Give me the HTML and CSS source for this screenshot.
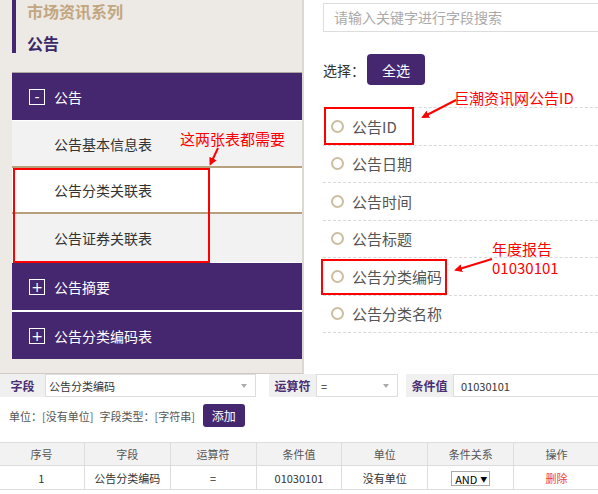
FILE: index.html
```html
<!DOCTYPE html>
<html lang="zh-CN">
<head>
<meta charset="utf-8">
<title>市场资讯系列</title>
<link rel="stylesheet" href="styles.css">
</head>
<body>
<div class="page">
  <div class="top">
    <aside class="side">
      <div class="brand">
        <div class="brand-title">市场资讯系列</div>
        <div class="brand-sub">公告</div>
      </div>
      <nav class="menu">
        <div class="menu-head"><span class="toggle">-</span>公告</div>
        <div class="menu-item first">公告基本信息表</div>
        <div class="menu-item active">公告分类关联表</div>
        <div class="menu-item last">公告证券关联表</div>
        <div class="menu-head"><span class="toggle">+</span>公告摘要</div>
        <div class="menu-head gap"><span class="toggle">+</span>公告分类编码表</div>
      </nav>
    </aside>
    <main class="fields">
      <div class="search">请输入关键字进行字段搜索</div>
      <div class="select-row"><span class="select-label">选择：</span><span class="btn-all">全选</span></div>
      <ul class="field-list">
        <li><span class="radio"></span>公告ID</li>
        <li><span class="radio"></span>公告日期</li>
        <li><span class="radio"></span>公告时间</li>
        <li><span class="radio"></span>公告标题</li>
        <li><span class="radio"></span>公告分类编码</li>
        <li><span class="radio"></span>公告分类名称</li>
      </ul>
    </main>
  </div>

  <div class="form-row">
    <div class="label">字段</div>
    <div class="sel sel-field">公告分类编码<span class="caret"></span></div>
    <div class="label label-op">运算符</div>
    <div class="sel sel-op">=<span class="caret"></span></div>
    <div class="label label-val">条件值</div>
    <div class="sel sel-val">01030101</div>
  </div>
  <div class="info-row">
    <span>单位：[没有单位]</span><span class="info-gap">字段类型：[字符串]</span>
    <span class="btn-add">添加</span>
  </div>

  <table class="cond">
    <thead>
      <tr><th>序号</th><th>字段</th><th>运算符</th><th>条件值</th><th>单位</th><th>条件关系</th><th>操作</th></tr>
    </thead>
    <tbody>
      <tr><td>1</td><td>公告分类编码</td><td>=</td><td>01030101</td><td>没有单位</td><td><span class="and">AND <span class="and-caret">▼</span></span></td><td class="del">删除</td></tr>
    </tbody>
  </table>

  <div class="note-box nb1"></div>
  <div class="note-box nb2"></div>
  <div class="note-box nb3"></div>
  <div class="note n1">这两张表都需要</div>
  <div class="note n2">巨潮资讯网公告ID</div>
  <div class="note n3">年度报告<br>01030101</div>
  <svg class="arrows" width="598" height="494" viewBox="0 0 598 494">
    <defs>
      <marker id="ah" markerWidth="8" markerHeight="8" refX="6" refY="4" orient="auto" markerUnits="userSpaceOnUse">
        <path d="M0,0 L8,4 L0,8 Z" fill="#f00"/>
      </marker>
    </defs>
    <line x1="218" y1="148" x2="210.5" y2="164" stroke="#f00" stroke-width="2" marker-end="url(#ah)"/>
    <line x1="456" y1="100" x2="423" y2="117" stroke="#f00" stroke-width="2" marker-end="url(#ah)"/>
    <line x1="492" y1="259" x2="456" y2="270" stroke="#f00" stroke-width="2" marker-end="url(#ah)"/>
  </svg>
</div>
</body>
</html>
```
FILE: styles.css
```css
* { box-sizing: border-box; }
html, body { margin: 0; padding: 0; }
body {
  font-family: "Noto Sans CJK SC", "Microsoft YaHei", sans-serif;
  color: #333;
  background: #fff;
}
.page {
  position: relative;
  width: 598px;
  height: 494px;
  overflow: hidden;
}

/* top area */
.top { display: flex; }
.side {
  width: 304px;
  flex: none;
  background: #ede9e4;
  padding: 0 0 14px 12px;
  border-right: 2px solid #dcd8d3;
  border-bottom: 1px solid #cfcac5;
}
.brand {
  height: 53px;
  border-left: 4px solid #45276f;
  padding-left: 11px;
  margin-bottom: 19px;
}
.brand-title {
  font-size: 16px;
  font-weight: bold;
  line-height: 20px;
  padding-top: 1px;
  color: #c2a680;
}
.brand-sub {
  font-size: 16px;
  font-weight: bold;
  line-height: 20px;
  margin-top: 12px;
  color: #3b2868;
}
.menu {
  background: #fff;
  border-top: 1px solid #aaa6a1;
}
.menu-head {
  height: 47px;
  background: #45276f;
  color: #fff;
  font-size: 14px;
  display: flex;
  align-items: center;
  padding-left: 17px;
}
.menu-head.gap { margin-top: 2px; }
.toggle {
  width: 16px;
  height: 16px;
  border: 1px solid #fff;
  display: flex;
  align-items: center;
  justify-content: center;
  margin-right: 9px;
  font-size: 14px;
  line-height: 1;
  font-family: "DejaVu Sans", sans-serif;
}
.menu-item {
  height: 45px;
  background: #f2f2f2;
  font-size: 14px;
  display: flex;
  align-items: center;
  padding-left: 42px;
  color: #333;
}
.menu-item.first { margin-top: 1px; }
.menu-item.active {
  background: #fff;
  height: 48px;
  border-top: 2px solid #b8a07c;
  border-bottom: 2px solid #b8a07c;
}
.menu-item.last { height: 48px; margin-bottom: 1px; }

.fields {
  flex: 1;
  min-width: 0;
  padding: 3px 0 0 19px;
}
.search {
  width: 300px;
  height: 29px;
  border: 1px solid #ddd;
  padding-left: 10px;
  font-size: 14px;
  line-height: 27px;
  color: #aaa;
}
.select-row {
  margin-top: 22px;
  height: 31px;
  display: flex;
  align-items: center;
}
.select-label { font-size: 14px; color: #333; margin-right: 2px; }
.btn-all {
  width: 58px;
  height: 31px;
  background: #45276f;
  color: #fff;
  font-size: 14px;
  border-radius: 4px;
  display: flex;
  align-items: center;
  justify-content: center;
}
.field-list {
  list-style: none;
  margin: 22px 0 0;
  padding: 0;
  width: 300px;
  border-top: 1px dashed #d8d8d8;
}
.field-list li {
  height: 37.5px;
  border-bottom: 1px dashed #d8d8d8;
  display: flex;
  align-items: center;
  padding-left: 8px;
  font-size: 15px;
  color: #555;
}
.radio {
  width: 13px;
  height: 13px;
  border: 2px solid #cdbd9f;
  border-radius: 50%;
  margin-right: 8px;
}

/* form */
.form-row {
  display: flex;
  height: 23px;
  font-size: 11px;
}
.label {
  width: 45px;
  flex: none;
  background: #f0f0f0;
  font-weight: bold;
  color: #4a2f73;
  font-size: 12px;
  display: flex;
  align-items: center;
  justify-content: center;
}
.label-op { width: 47px; margin-left: 13px; }
.label-val { width: 47px; margin-left: 8px; }
.sel {
  position: relative;
  flex: none;
  border: 1px solid #ddd;
  background: #fff;
  color: #333;
  display: flex;
  align-items: center;
  padding-left: 3px;
}
.sel-field { width: 211px; }
.sel-op { width: 82px; padding-left: 4px; }
.sel-val { width: 160px; padding-left: 7px; }
.caret {
  position: absolute;
  right: 8px;
  top: 9px;
  width: 0;
  height: 0;
  border-top: 4px solid #aaa;
  border-left: 3.5px solid transparent;
  border-right: 3.5px solid transparent;
}
.info-row {
  margin-top: 7px;
  height: 23px;
  display: flex;
  align-items: center;
  padding-left: 9px;
  font-size: 11px;
  color: #555;
}
.info-gap { margin-left: 6px; }
.btn-add {
  margin-left: 8px;
  width: 42px;
  height: 23px;
  background: #45276f;
  color: #fff;
  font-size: 12px;
  border-radius: 3px;
  display: flex;
  align-items: center;
  justify-content: center;
}

.cond {
  margin-top: 15px;
  margin-left: -2px;
  width: 602px;
  border-collapse: collapse;
  table-layout: fixed;
  font-size: 11px;
}
.cond th, .cond td {
  border: 1px solid #ddd;
  text-align: center;
  padding: 0;
}
.cond th {
  height: 23px;
  background: #f2f2f2;
  font-weight: normal;
  color: #555;
}
.cond td { height: 24px; color: #333; }
.and {
  display: inline-flex;
  align-items: center;
  width: 39px;
  height: 15px;
  border: 1px solid #a9a9a9;
  padding-left: 3px;
  font-size: 11px;
  color: #000;
  vertical-align: middle;
}
.and-caret { font-size: 7px; margin-left: 3px; }
.cond td.del { color: #e8413c; }

/* annotations */
.note-box {
  position: absolute;
  border: 2px solid #f00;
}
.nb1 { left: 13px; top: 168px; width: 197px; height: 95px; }
.nb2 { left: 324px; top: 107px; width: 90px; height: 38px; }
.nb3 { left: 321px; top: 259px; width: 126px; height: 36px; }
.note {
  position: absolute;
  color: #f00;
  font-size: 15px;
  line-height: 19px;
  white-space: nowrap;
}
.n1 { left: 180px; top: 129px; }
.n2 { left: 454px; top: 88px; }
.n3 { left: 492px; top: 239px; }
.arrows {
  position: absolute;
  left: 0;
  top: 0;
  pointer-events: none;
}
```
